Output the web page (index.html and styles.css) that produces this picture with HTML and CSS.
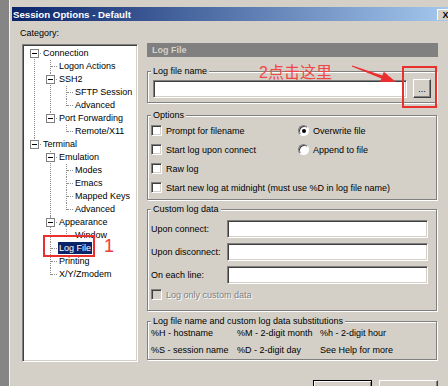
FILE: index.html
```html
<!DOCTYPE html>
<html lang="en">
<head>
    <meta charset="UTF-8">
    <title>Session Options - Default</title>
    <link rel="stylesheet" href="styles.css">
</head>
<body>
    <div class="window">
        <div class="titlebar">
            <span class="title">Session Options - Default</span>
            <span class="close-btn">X</span>
        </div>

        <div class="content">
            <!-- CATEGORY TREE -->
            <div class="left">
                <div class="cat-label">Category:</div>
                <div class="tree-box">
                    <ul class="tree">
                        <li><span class="node"><i class="exp"></i><span class="lbl">Connection</span></span>
                            <ul>
                                <li><span class="node"><span class="lbl">Logon Actions</span></span></li>
                                <li><span class="node"><i class="exp"></i><span class="lbl">SSH2</span></span>
                                    <ul>
                                        <li><span class="node"><span class="lbl">SFTP Session</span></span></li>
                                        <li><span class="node"><span class="lbl">Advanced</span></span></li>
                                    </ul>
                                </li>
                                <li><span class="node"><i class="exp"></i><span class="lbl">Port Forwarding</span></span>
                                    <ul>
                                        <li><span class="node"><span class="lbl">Remote/X11</span></span></li>
                                    </ul>
                                </li>
                            </ul>
                        </li>
                        <li><span class="node"><i class="exp"></i><span class="lbl">Terminal</span></span>
                            <ul>
                                <li><span class="node"><i class="exp"></i><span class="lbl">Emulation</span></span>
                                    <ul>
                                        <li><span class="node"><span class="lbl">Modes</span></span></li>
                                        <li><span class="node"><span class="lbl">Emacs</span></span></li>
                                        <li><span class="node"><span class="lbl">Mapped Keys</span></span></li>
                                        <li><span class="node"><span class="lbl">Advanced</span></span></li>
                                    </ul>
                                </li>
                                <li><span class="node"><i class="exp"></i><span class="lbl">Appearance</span></span>
                                    <ul>
                                        <li><span class="node"><span class="lbl">Window</span></span></li>
                                    </ul>
                                </li>
                                <li><span class="node"><span class="lbl selected">Log File</span></span></li>
                                <li><span class="node"><span class="lbl">Printing</span></span></li>
                                <li><span class="node"><span class="lbl">X/Y/Zmodem</span></span></li>
                            </ul>
                        </li>
                    </ul>
                </div>
            </div>

            <!-- LOG FILE PAGE -->
            <div class="right">
                <div class="page-header">Log File</div>

                <div class="group group-file">
                    <div class="group-title">Log file name</div>
                    <div class="file-row">
                        <input type="text" class="field file-field">
                        <button class="btn browse-btn">...</button>
                    </div>
                </div>

                <div class="group group-options">
                    <div class="group-title">Options</div>
                    <div class="options-grid">
                        <div class="opt"><span class="chk"></span>Prompt for filename</div>
                        <div class="opt"><span class="radio checked"></span>Overwrite file</div>
                        <div class="opt"><span class="chk"></span>Start log upon connect</div>
                        <div class="opt"><span class="radio"></span>Append to file</div>
                        <div class="opt"><span class="chk"></span>Raw log</div>
                        <div class="opt"></div>
                        <div class="opt wide"><span class="chk"></span>Start new log at midnight (must use %D in log file name)</div>
                    </div>
                </div>

                <div class="group group-custom">
                    <div class="group-title">Custom log data</div>
                    <div class="custom-grid">
                        <span>Upon connect:</span><input type="text" class="field">
                        <span>Upon disconnect:</span><input type="text" class="field">
                        <span>On each line:</span><input type="text" class="field">
                    </div>
                    <div class="opt disabled"><span class="chk"></span>Log only custom data</div>
                </div>

                <div class="group group-subst">
                    <div class="group-title">Log file name and custom log data substitutions</div>
                    <div class="subst-grid">
                        <span>%H - hostname</span><span>%M - 2-digit month</span><span>%h - 2-digit hour</span>
                        <span>%S - session name</span><span>%D - 2-digit day</span><span>See Help for more</span>
                    </div>
                </div>

                <!-- OK / Cancel, only their top edges are in view -->
                <div class="dialog-buttons">
                    <button class="btn dlg-btn default"></button>
                    <button class="btn dlg-btn"></button>
                </div>
            </div>
        </div>
    </div>

    <!-- annotations drawn over the screenshot -->
    <div class="mark mark-1"></div>
    <div class="mark-num">1</div>
    <div class="mark mark-2"></div>
    <div class="mark-text">2点击这里</div>
    <svg class="mark-arrow" width="54" height="28" viewBox="0 0 54 28">
        <polygon points="4.2,5.5 34.4,15.4 35.8,11.7 48,22 32,22 33.4,18.4 3.8,6.5" fill="#ea2f2f"/>
    </svg>
</body>
</html>
```

FILE: styles.css
```css
body {
    margin: 0;
    width: 448px;
    height: 386px;
    overflow: hidden;
    position: relative;
    background: #858585;
    font-family: "Liberation Sans", Arial, sans-serif;
    font-size: 9px;
    color: #000;
}

.window {
    margin-left: 9px;
    width: 460px;
    height: 400px;
    background: #d4d0c8;
    border-left: 1px solid #f4f3ef;
    padding: 7px 0 0 2px;
    box-sizing: border-box;
}

.titlebar {
    display: flex;
    align-items: center;
    width: 443px;
    height: 14px;
    background: linear-gradient(90deg, #0a246a 0%, #a6caf0 100%);
}

.title {
    color: #fff;
    font-weight: bold;
    font-size: 9.7px;
    padding-left: 1px;
}

.close-btn {
    margin-left: auto;
    margin-right: 2px;
    width: 16px;
    height: 11px;
    line-height: 11px;
    text-align: center;
    font-weight: bold;
    font-size: 9px;
    background: #d4d0c8;
    border-top: 1px solid #fff;
    border-left: 1px solid #fff;
    box-sizing: border-box;
}

.content {
    display: flex;
}

/* ---------- left column ---------- */

.left {
    width: 118px;
    margin-left: 8px;
    padding-top: 6px;
}

.cat-label {
    height: 12px;
    line-height: 12px;
}

.tree-box {
    margin: 5px 0 0 2px;
    width: 116px;
    height: 318px;
    background: #fff;
    border: 1px solid;
    border-color: #808080 #fff #fff #808080;
    box-shadow: inset 1px 1px 0 #404040, inset -1px -1px 0 #d4d0c8;
    box-sizing: border-box;
    padding: 2px 0 0 2px;
}

.tree, .tree ul {
    list-style: none;
    margin: 0;
    padding: 0;
}

.tree {
    padding-left: 1px;
}

.tree li {
    position: relative;
    padding-left: 16px;
}

.tree li::before {
    content: "";
    position: absolute;
    left: 8px;
    top: 0;
    bottom: 0;
    border-left: 1px dotted #909090;
}

.tree li:last-child::before {
    bottom: auto;
    height: 7px;
}

.tree > li:first-child::before {
    top: 6px;
    bottom: 0;
    height: auto;
}

.tree li::after {
    content: "";
    position: absolute;
    left: 9px;
    top: 6px;
    width: 6px;
    border-top: 1px dotted #909090;
}

.node {
    display: block;
    height: 13px;
    line-height: 13px;
    white-space: nowrap;
}

.lbl {
    display: inline-block;
    padding: 0 1px;
    line-height: 12px;
}

.lbl.selected {
    background: #0a246a;
    color: #fff;
}

.exp {
    position: absolute;
    left: 4px;
    top: 2px;
    width: 9px;
    height: 9px;
    border: 1px solid #808080;
    background: #fff;
    box-sizing: border-box;
    z-index: 1;
}

.exp::after {
    content: "";
    position: absolute;
    left: 1px;
    top: 3px;
    width: 5px;
    height: 1px;
    background: #000;
}

/* ---------- right column ---------- */

.right {
    width: 291px;
    margin-left: 9px;
    padding-top: 22px;
}

.page-header {
    height: 14px;
    line-height: 14px;
    background: #808080;
    color: #d4d0c8;
    font-weight: bold;
    padding-left: 5px;
}

.group {
    border: 1px solid #808080;
    box-shadow: inset 1px 1px 0 #fff, 1px 1px 0 #fff;
    box-sizing: border-box;
    width: 290px;
    padding: 0 0 0 3px;
}

.group-title {
    width: max-content;
    margin: -7px 0 0 0;
    padding: 0 2px;
    height: 12px;
    line-height: 12px;
    background: #d4d0c8;
}

.group-file {
    margin-top: 14px;
    height: 32px;
}

.file-row {
    display: flex;
    align-items: center;
    margin-top: 2px;
    height: 19px;
    padding-left: 2px;
}

.field {
    display: block;
    height: 18px;
    margin: 0;
    padding: 0;
    background: #fff;
    border: 1px solid;
    border-color: #808080 #fff #fff #808080;
    box-shadow: inset 1px 1px 0 #404040, inset -1px -1px 0 #d4d0c8;
    box-sizing: border-box;
}

.file-field {
    width: 254px;
}

.btn {
    font-family: inherit;
    font-size: 9px;
    background: #d4d0c8;
    border: 1px solid;
    border-color: #fff #404040 #404040 #fff;
    box-shadow: inset -1px -1px 0 #808080;
    box-sizing: border-box;
    padding: 0;
    color: #000;
}

.browse-btn {
    width: 18px;
    height: 19px;
    margin-left: 6px;
    line-height: 19px;
}

.group-options {
    margin-top: 12px;
    height: 85px;
}

.options-grid {
    display: grid;
    grid-template-columns: 147px auto;
    grid-auto-rows: 19px;
}

.opt {
    display: flex;
    align-items: center;
    white-space: nowrap;
    height: 19px;
}

.opt.wide {
    grid-column: 1 / 3;
}

.chk {
    width: 11px;
    height: 11px;
    margin-right: 4px;
    background: #fff;
    border: 1px solid;
    border-color: #808080 #fff #fff #808080;
    box-shadow: inset 1px 1px 0 #404040, inset -1px -1px 0 #d4d0c8;
    box-sizing: border-box;
}

.radio {
    position: relative;
    width: 11px;
    height: 11px;
    margin-right: 4px;
    border-radius: 50%;
    background: #fff;
    border: 1px solid;
    border-color: #808080 #fff #fff #808080;
    box-shadow: inset 1px 1px 0 #404040;
    box-sizing: border-box;
}

.radio.checked::after {
    content: "";
    position: absolute;
    left: 2.5px;
    top: 2.5px;
    width: 4px;
    height: 4px;
    border-radius: 50%;
    background: #000;
}

.group-custom {
    margin-top: 9px;
    height: 102px;
}

.custom-grid {
    display: grid;
    grid-template-columns: 76px 201px;
    grid-auto-rows: 18px;
    row-gap: 5px;
    align-items: center;
    margin-top: 5px;
}

.opt.disabled {
    margin-top: 1px;
    color: #808080;
    text-shadow: 1px 1px 0 #fff;
}

.opt.disabled .chk {
    background: #d4d0c8;
}

.group-subst {
    margin-top: 10px;
    height: 39px;
}

.subst-grid {
    display: grid;
    grid-template-columns: 86px 83px auto;
    grid-auto-rows: 12px;
    row-gap: 5px;
    line-height: 12px;
    white-space: nowrap;
}

.dialog-buttons {
    display: flex;
    gap: 7px;
    margin: 20px 0 0 166px;
}

.dlg-btn {
    width: 62px;
    height: 23px;
}

.dlg-btn.default {
    border: 1px solid #000;
    box-shadow: inset 1px 1px 0 #fff, inset -1px -1px 0 #808080;
}

/* ---------- red annotations ---------- */

.mark {
    position: absolute;
    border: 2px solid #ea2f2f;
    box-sizing: border-box;
}

.mark-1 {
    left: 43px;
    top: 235px;
    width: 52px;
    height: 22px;
}

.mark-2 {
    left: 402px;
    top: 66px;
    width: 35px;
    height: 42px;
}

.mark-num {
    position: absolute;
    left: 104px;
    top: 236px;
    font-size: 18px;
    line-height: 20px;
    color: #ee3a3a;
}

.mark-text {
    position: absolute;
    left: 259px;
    top: 63px;
    font-family: "Liberation Sans", "Noto Sans CJK SC", sans-serif;
    font-size: 16px;
    line-height: 20px;
    color: #f04646;
}

.mark-arrow {
    position: absolute;
    left: 348px;
    top: 60px;
}
```
